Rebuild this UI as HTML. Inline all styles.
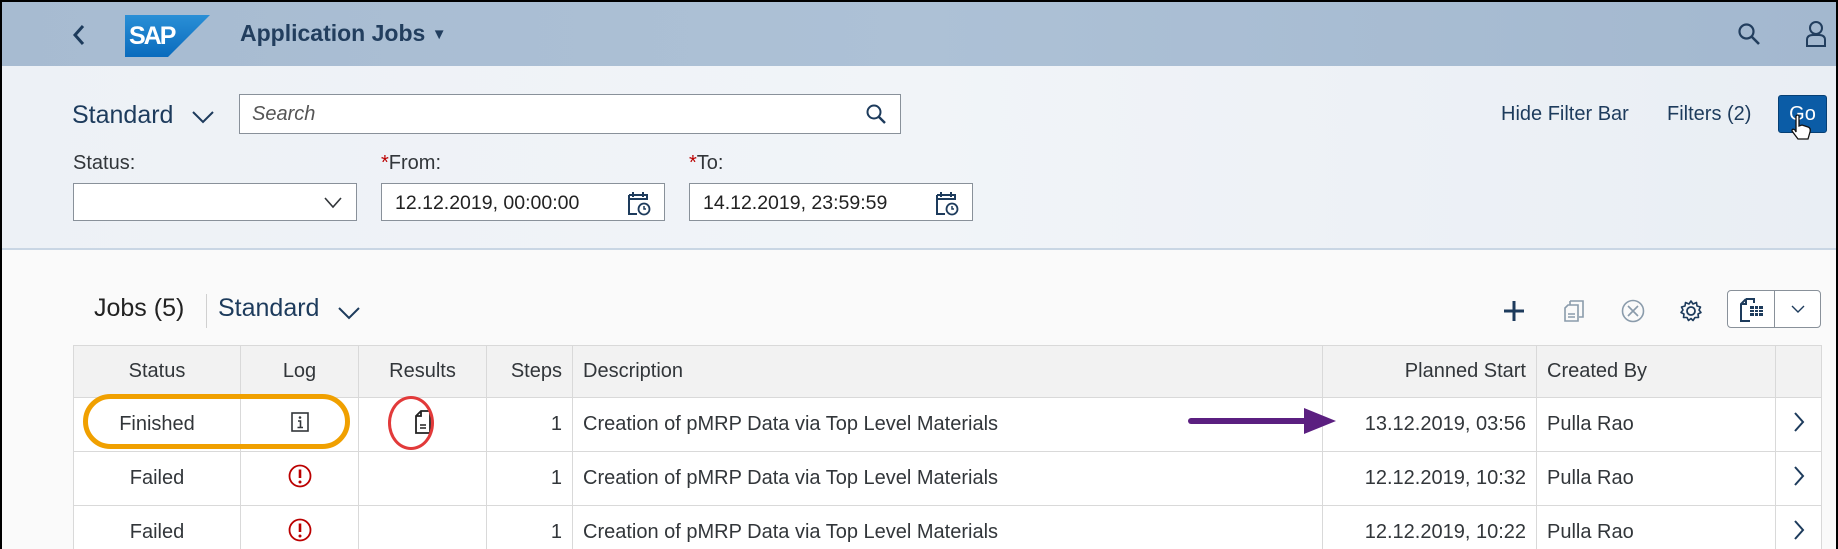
<!DOCTYPE html>
<html><head><meta charset="utf-8">
<style>
*{box-sizing:border-box;margin:0;padding:0}
html,body{width:1838px;height:549px;overflow:hidden}
body{background:#000;font-family:"Liberation Sans",sans-serif;color:#32363a;position:relative}
.abs{position:absolute}
#page{position:absolute;left:2px;top:2px;width:1834px;height:547px;background:#fafafa;overflow:hidden}
#hdr{position:absolute;left:0;top:0;width:1836px;height:64px;background:linear-gradient(90deg,#a7bbd1 0%,#adc1d6 50%,#a3b8cf 100%)}
#fb{position:absolute;left:0;top:64px;width:1836px;height:184px;background:linear-gradient(90deg,#edf1f6,#f1f4f8,#e9eef4);border-bottom:2px solid #c9d6e4}
.t{position:absolute;white-space:nowrap}
.inp{position:absolute;background:#fff;border:1px solid #89919a;height:38px}
.lbl{font-size:20px;color:#32363a}
table{position:absolute;left:71px;top:343px;border-collapse:collapse;font-size:20px;background:#fff;table-layout:fixed}
td,th{border:1px solid #d9d9d9;height:54px;padding:0 10px;font-weight:normal;white-space:nowrap;overflow:hidden}
th{background:#f2f2f2;height:52px}
.c{text-align:center}.r{text-align:right}
</style></head><body>
<div id="page">
<div id="hdr">
 <svg class="abs" style="left:70px;top:22px" width="14" height="22" viewBox="0 0 14 22"><path d="M11 2 L3 11 L11 20" stroke="#1d3b5c" stroke-width="3" fill="none"/></svg>
 <svg class="abs" style="left:123px;top:13px" width="85" height="42" viewBox="0 0 85 42"><defs><linearGradient id="g" x1="0" y1="0" x2="0" y2="1"><stop offset="0" stop-color="#2a8fd6"/><stop offset="1" stop-color="#0a6bbd"/></linearGradient></defs><path d="M0 0 H85 L43 42 H0 Z" fill="url(#g)"/><text x="4" y="29" font-family="Liberation Sans" font-weight="bold" font-size="25" fill="#fff" letter-spacing="-2">SAP</text></svg>
 <div class="t" style="left:238px;top:18px;font-size:23px;font-weight:bold;color:#223e5e">Application Jobs <span style="font-size:15px;position:relative;top:-2px">▼</span></div>
 <svg class="abs" style="left:1735px;top:20px" width="24" height="24" viewBox="0 0 24 24"><circle cx="9.5" cy="9.5" r="7" stroke="#223e5e" stroke-width="2.2" fill="none"/><path d="M15 15 L22 22" stroke="#223e5e" stroke-width="2.6"/></svg>
 <svg class="abs" style="left:1803px;top:18px" width="22" height="28" viewBox="0 0 22 28"><circle cx="11" cy="8" r="6" stroke="#223e5e" stroke-width="2" fill="none"/><path d="M2 26 V20 Q2 15 8 15 H14 Q20 15 20 20 V26 Z" stroke="#223e5e" stroke-width="2" fill="none"/></svg>
</div>
<div id="fb">
 <div class="t" style="left:70px;top:35px;font-size:25px;color:#1d3b5c">Standard</div>
 <svg class="abs" style="left:189px;top:44px" width="24" height="14" viewBox="0 0 24 14"><path d="M2 2 L12 12 L22 2" stroke="#1d3b5c" stroke-width="2" fill="none"/></svg>
 <div class="inp" style="left:237px;top:28px;width:662px;height:40px"><span class="t" style="left:12px;top:8px;font-size:20px;font-style:italic;color:#555">Search</span>
  <svg class="abs" style="left:625px;top:8px" width="22" height="22" viewBox="0 0 22 22"><circle cx="9" cy="9" r="6.5" stroke="#1d3b5c" stroke-width="2" fill="none"/><path d="M14 14 L20 20" stroke="#1d3b5c" stroke-width="2.4"/></svg></div>
 <div class="t lbl" style="left:71px;top:86px">Status:</div>
 <div class="t lbl" style="left:379px;top:86px"><span style="color:#b00">*</span>From:</div>
 <div class="t lbl" style="left:687px;top:86px"><span style="color:#b00">*</span>To:</div>
 <div class="inp" style="left:71px;top:117px;width:284px"><svg class="abs" style="left:250px;top:13px" width="18" height="12" viewBox="0 0 18 12"><path d="M1 1 L9 10 L17 1" stroke="#32363a" stroke-width="1.6" fill="none"/></svg></div>
 <div class="inp" style="left:379px;top:117px;width:284px"><span class="t" style="left:13px;top:8px;font-size:19.5px;color:#222">12.12.2019, 00:00:00</span>
  <svg class="abs" style="left:245px;top:6px" width="24" height="26" viewBox="0 0 24 26"><path d="M2 5 H20 V10 M2 5 V24 H10 M6 2 V7 M16 2 V7 M2 9 H20" stroke="#1d3b5c" stroke-width="2" fill="none"/><circle cx="17" cy="19" r="5.5" stroke="#1d3b5c" stroke-width="1.8" fill="none"/><path d="M17 16 V19 H19" stroke="#1d3b5c" stroke-width="1.5" fill="none"/></svg></div>
 <div class="inp" style="left:687px;top:117px;width:284px"><span class="t" style="left:13px;top:8px;font-size:19.5px;color:#222">14.12.2019, 23:59:59</span>
  <svg class="abs" style="left:245px;top:6px" width="24" height="26" viewBox="0 0 24 26"><path d="M2 5 H20 V10 M2 5 V24 H10 M6 2 V7 M16 2 V7 M2 9 H20" stroke="#1d3b5c" stroke-width="2" fill="none"/><circle cx="17" cy="19" r="5.5" stroke="#1d3b5c" stroke-width="1.8" fill="none"/><path d="M17 16 V19 H19" stroke="#1d3b5c" stroke-width="1.5" fill="none"/></svg></div>
 <div class="t" style="left:1499px;top:37px;font-size:20px;color:#1d3b5c">Hide Filter Bar</div>
 <div class="t" style="left:1665px;top:37px;font-size:20px;color:#1d3b5c">Filters (2)</div>
 <div class="abs" style="left:1776px;top:29px;width:49px;height:38px;background:#0b5ca6;border:1px solid #063f74;border-radius:3px;color:#fff;font-size:20px;text-align:center;line-height:36px">Go</div>
 <svg class="abs" style="left:1788px;top:48px" width="22" height="28" viewBox="0 0 22 28"><path d="M6 2 Q8 0 9 2 V12 L12 11 L15 12 L18 13 Q21 14 20 18 L18 25 H8 L2 17 Q2 14 5 16 L6 18 Z" fill="#fff" stroke="#111" stroke-width="1.3"/></svg>
</div>
<div class="t" style="left:92px;top:292px;font-size:25px;color:#222">Jobs (5)</div>
<div class="abs" style="left:204px;top:292px;width:1px;height:34px;background:#d0d0d0"></div>
<div class="t" style="left:216px;top:292px;font-size:25px;color:#1d3b5c">Standard</div>
<svg class="abs" style="left:335px;top:304px" width="24" height="14" viewBox="0 0 24 14"><path d="M2 2 L12 12 L22 2" stroke="#1d3b5c" stroke-width="2" fill="none"/></svg>
<svg class="abs" style="left:1500px;top:297px" width="24" height="24" viewBox="0 0 24 24"><path d="M12 2 V22 M2 12 H22" stroke="#1d3b5c" stroke-width="3"/></svg>
<svg class="abs" style="left:1561px;top:297px" width="22" height="24" viewBox="0 0 22 24"><path d="M7 2 H20 V18 H16 M7 2 V6" stroke="#8a9bab" stroke-width="1.6" fill="none"/><path d="M5 6 H15 V22 H2 V9 Z" stroke="#8a9bab" stroke-width="1.6" fill="none"/><path d="M5 15 H12 M5 18 H12" stroke="#8a9bab" stroke-width="1.4"/></svg>
<svg class="abs" style="left:1619px;top:297px" width="24" height="24" viewBox="0 0 24 24"><circle cx="12" cy="12" r="10.5" stroke="#8a9bab" stroke-width="1.6" fill="none"/><path d="M7 7 L17 17 M17 7 L7 17" stroke="#8a9bab" stroke-width="1.6"/></svg>
<svg class="abs" style="left:1677px;top:297px" width="24" height="24" viewBox="0 0 24 24"><circle cx="12" cy="12" r="4" stroke="#1d3b5c" stroke-width="1.8" fill="none"/><path d="M12 2 L14 5 L17.5 3.5 L18 7 L21.5 8 L20 11 L22 13.5 L19 15 L19.5 18.5 L16 18.5 L14 21.5 L12 19.5 L9.5 21.5 L8 18.5 L4.5 18.5 L5 15 L2 13.5 L4 11 L2.5 8 L6 7 L6.5 3.5 L10 5 Z" stroke="#1d3b5c" stroke-width="1.6" fill="none" stroke-linejoin="round"/></svg>
<div class="abs" style="left:1725px;top:288px;width:94px;height:38px;border:1px solid #89919a;border-radius:4px;background:#fff"><div class="abs" style="left:46px;top:0;width:1px;height:36px;background:#89919a"></div>
 <svg class="abs" style="left:10px;top:6px" width="28" height="26" viewBox="0 0 28 26"><path d="M8 2 H16 V6 M8 2 L3 7 V24 H12 M3 7 H8 V2" stroke="#1d3b5c" stroke-width="2" fill="none"/><rect x="12" y="9" width="13" height="10" fill="#1d3b5c"/><path d="M12 12.5 H25 M12 15.5 H25 M16.5 9 V19 M20.5 9 V19" stroke="#fff" stroke-width="1"/></svg>
 <svg class="abs" style="left:63px;top:14px" width="14" height="9" viewBox="0 0 14 9"><path d="M1 1 L7 7 L13 1" stroke="#1d3b5c" stroke-width="1.4" fill="none"/></svg></div>
<table>
<colgroup><col style="width:167px"><col style="width:118px"><col style="width:128px"><col style="width:86px"><col style="width:750px"><col style="width:214px"><col style="width:239px"><col style="width:46px"></colgroup>
<tr><th class="c">Status</th><th class="c">Log</th><th class="c">Results</th><th class="r">Steps</th><th style="text-align:left">Description</th><th class="r">Planned Start</th><th style="text-align:left">Created By</th><th></th></tr>
<tr><td class="c">Finished</td><td class="c"><svg width="18" height="20" viewBox="0 0 18 20"><rect x="1" y="1" width="16" height="18" stroke="#32363a" stroke-width="1.6" fill="none"/><circle cx="9" cy="5.5" r="1.3" fill="#32363a"/><path d="M7 9 H9.5 V15.5 M6.5 15.5 H12" stroke="#32363a" stroke-width="1.6" fill="none"/></svg></td><td class="c"><svg width="18" height="24" viewBox="0 0 18 24"><path d="M7 1 H16 V23 H2 V6 Z M7 1 V6 H2" stroke="#222" stroke-width="1.8" fill="none"/><path d="M6 15 H12 M6 18 H12" stroke="#222" stroke-width="1.5"/></svg></td><td class="r">1</td><td>Creation of pMRP Data via Top Level Materials</td><td class="r">13.12.2019, 03:56</td><td>Pulla Rao</td><td class="c"><svg width="12" height="22" viewBox="0 0 12 22"><path d="M2 2 L10 11 L2 20" stroke="#1d3b5c" stroke-width="2" fill="none"/></svg></td></tr>
<tr><td class="c">Failed</td><td class="c"><svg width="24" height="24" viewBox="0 0 24 24"><circle cx="12" cy="12" r="10.5" stroke="#b00" stroke-width="1.8" fill="none"/><path d="M12 5.5 V14" stroke="#b00" stroke-width="2.6"/><circle cx="12" cy="18" r="1.5" fill="#b00"/></svg></td><td></td><td class="r">1</td><td>Creation of pMRP Data via Top Level Materials</td><td class="r">12.12.2019, 10:32</td><td>Pulla Rao</td><td class="c"><svg width="12" height="22" viewBox="0 0 12 22"><path d="M2 2 L10 11 L2 20" stroke="#1d3b5c" stroke-width="2" fill="none"/></svg></td></tr>
<tr><td class="c">Failed</td><td class="c"><svg width="24" height="24" viewBox="0 0 24 24"><circle cx="12" cy="12" r="10.5" stroke="#b00" stroke-width="1.8" fill="none"/><path d="M12 5.5 V14" stroke="#b00" stroke-width="2.6"/><circle cx="12" cy="18" r="1.5" fill="#b00"/></svg></td><td></td><td class="r">1</td><td>Creation of pMRP Data via Top Level Materials</td><td class="r">12.12.2019, 10:22</td><td>Pulla Rao</td><td class="c"><svg width="12" height="22" viewBox="0 0 12 22"><path d="M2 2 L10 11 L2 20" stroke="#1d3b5c" stroke-width="2" fill="none"/></svg></td></tr>
</table>
<div class="abs" style="left:81px;top:392px;width:267px;height:55px;border:5px solid #f0a000;border-radius:28px"></div>
<div class="abs" style="left:386px;top:394px;width:46px;height:54px;border:3px solid #e23a3a;border-radius:50%"></div>
<svg class="abs" style="left:1186px;top:403px" width="150" height="32" viewBox="0 0 150 32"><path d="M3 16 H120" stroke="#5b1f80" stroke-width="6" stroke-linecap="round"/><path d="M116 3 L148 16 L116 29 Z" fill="#5b1f80"/></svg>
</div>
</body></html>
